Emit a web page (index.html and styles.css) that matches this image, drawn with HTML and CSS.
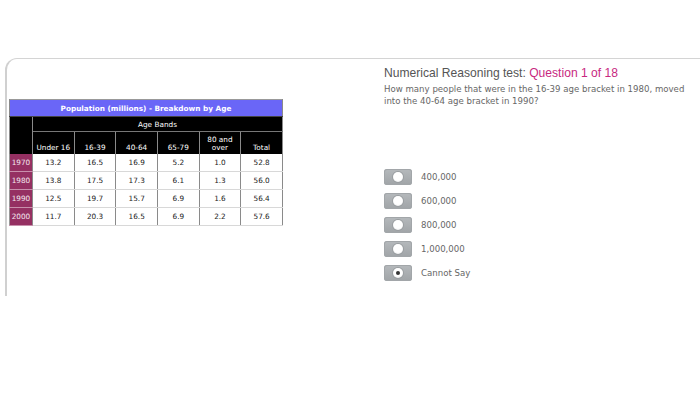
FILE: index.html
```html
<!DOCTYPE html>
<html lang="en">
<head>
    <meta charset="UTF-8">
    <meta name="viewport" content="width=device-width, initial-scale=1.0">
    <title>Numerical Reasoning test</title>
    <link rel="stylesheet" href="styles.css">
</head>
<body>
    <div id="panel">
        <div id="data-side">
            <table id="pop-table">
                <tr>
                    <td class="table-title" colspan="7">Population (millions) - Breakdown by Age</td>
                </tr>
                <tr>
                    <td class="corner" rowspan="2"></td>
                    <td class="band" colspan="6">Age Bands</td>
                </tr>
                <tr class="head-row">
                    <td>Under 16</td>
                    <td>16-39</td>
                    <td>40-64</td>
                    <td>65-79</td>
                    <td>80 and<br>over</td>
                    <td>Total</td>
                </tr>
                <tr>
                    <td class="year">1970</td>
                    <td>13.2</td><td>16.5</td><td>16.9</td><td>5.2</td><td>1.0</td><td>52.8</td>
                </tr>
                <tr>
                    <td class="year">1980</td>
                    <td>13.8</td><td>17.5</td><td>17.3</td><td>6.1</td><td>1.3</td><td>56.0</td>
                </tr>
                <tr>
                    <td class="year">1990</td>
                    <td>12.5</td><td>19.7</td><td>15.7</td><td>6.9</td><td>1.6</td><td>56.4</td>
                </tr>
                <tr>
                    <td class="year">2000</td>
                    <td>11.7</td><td>20.3</td><td>16.5</td><td>6.9</td><td>2.2</td><td>57.6</td>
                </tr>
            </table>
        </div>

        <div id="question-side">
            <div id="test-title">Numerical Reasoning test: <span class="q-num">Question 1 of 18</span></div>
            <div id="question-text">How many people that were in the 16-39 age bracket in 1980, moved into the 40-64 age bracket in 1990?</div>

            <div id="answers">
                <div class="answer"><span class="radio"><span class="hole"></span></span>400,000</div>
                <div class="answer"><span class="radio"><span class="hole"></span></span>600,000</div>
                <div class="answer"><span class="radio"><span class="hole"></span></span>800,000</div>
                <div class="answer"><span class="radio"><span class="hole"></span></span>1,000,000</div>
                <div class="answer"><span class="radio"><span class="hole checked"></span></span>Cannot Say</div>
            </div>
        </div>
    </div>
</body>
</html>
```

FILE: styles.css
```css
body {
    margin: 0;
    padding: 0;
    background-color: #fff;
    font-family: 'DejaVu Sans', Verdana, sans-serif;
}

#panel {
    margin: 58px 0 0 5px;
    height: 237px;
    border-top: 1px solid #d4d4d4;
    border-left: 2px solid #d0d0d0;
    border-top-left-radius: 12px;
    display: flex;
}

#data-side {
    width: 375px;
    padding: 40px 0 0 2px;
}

#pop-table {
    border-collapse: collapse;
    border: 1px solid #999;
    font-size: 7.3px;
    width: 274px;
}

#pop-table td {
    padding: 0;
    text-align: center;
    height: 17px;
    border-left: 1px solid #8a8a8a;
    border-right: 1px solid #8a8a8a;
    border-bottom: 1px solid #d8d8d8;
    color: #222;
}

#pop-table .table-title {
    background-color: #6a66f7;
    color: #fff;
    font-weight: bold;
    height: 16px;
    border-bottom: 1px solid #444;
}

#pop-table .corner {
    background-color: #000;
    width: 22px;
    border-bottom: none;
}

#pop-table .band {
    background-color: #000;
    color: #fff;
    height: 14px;
    border-bottom: 1px solid #777;
}

#pop-table .head-row td {
    background-color: #000;
    color: #fff;
    height: 20px;
    vertical-align: bottom;
    line-height: 8px;
    padding-bottom: 2px;
    width: 41px;
    border-bottom: none;
}

#pop-table .year {
    background-color: #953062;
    color: #f4e6ee;
    border-bottom: 1px solid #c890ac;
    border-left: none;
}

#question-side {
    padding: 7px 0 0 0;
    color: #5a5a5a;
}

#test-title {
    font-family: 'Liberation Sans', Arial, sans-serif;
    font-size: 12.1px;
    color: #555;
    margin-bottom: 3px;
}

.q-num {
    color: #c8287f;
}

#question-text {
    font-size: 8.6px;
    line-height: 12px;
    width: 312px;
    color: #666;
}

#answers {
    margin-top: 62px;
}

.answer {
    display: flex;
    align-items: center;
    height: 16px;
    margin-bottom: 8px;
    font-size: 8.6px;
    color: #666;
}

.radio {
    width: 28px;
    height: 16px;
    margin-right: 9px;
    border-radius: 3px;
    background: linear-gradient(#b5b9bc, #a0a4a7);
    box-shadow: inset 0 0 0 1px #a2a6a9;
    display: flex;
    align-items: center;
    justify-content: center;
}

.hole {
    width: 10px;
    height: 10px;
    border-radius: 50%;
    background: radial-gradient(circle at 50% 40%, #fff 55%, #d8dadc 100%);
    box-shadow: 0 0 0 1px #9a9ea1;
    display: flex;
    align-items: center;
    justify-content: center;
}

.hole.checked::after {
    content: '';
    width: 4px;
    height: 4px;
    border-radius: 50%;
    background-color: #333;
}
```
